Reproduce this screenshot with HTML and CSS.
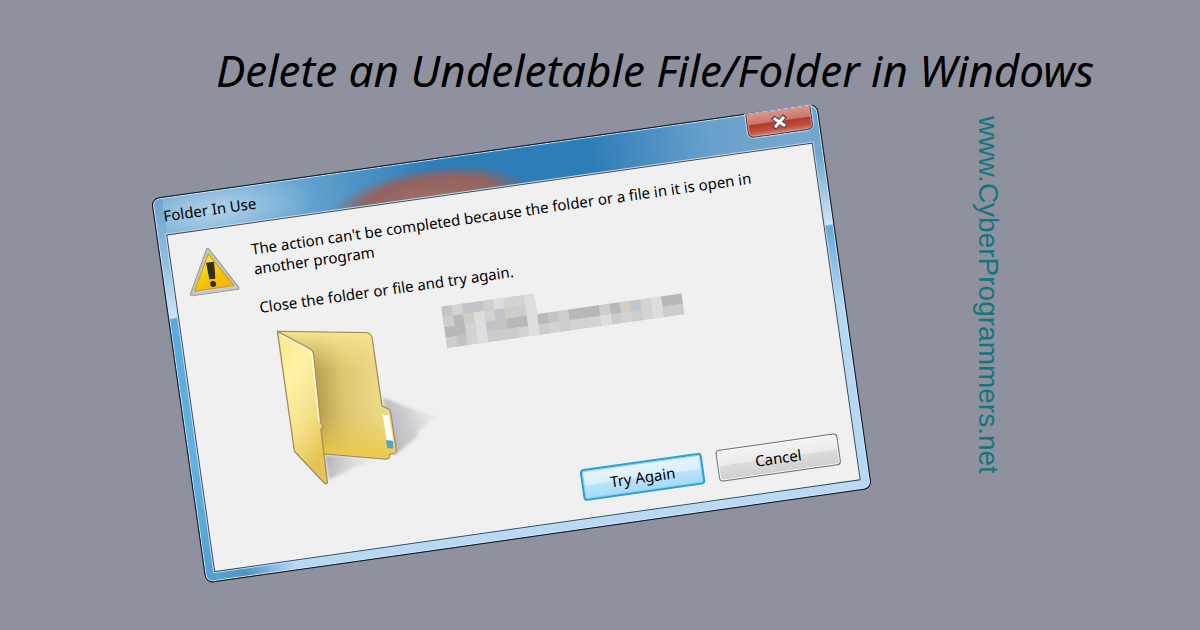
FILE: index.html
```
<!DOCTYPE html>
<html lang="en">
<head>
    <meta charset="UTF-8">
    <meta name="viewport" content="width=device-width, initial-scale=1.0">
    <title>Delete an Undeletable File/Folder in Windows</title>
    <link rel="stylesheet" href="styles.css">
</head>
<body>
    <h1 class="headline">Delete an Undeletable File/Folder in Windows</h1>

    <main class="stage">
        <section class="dialog" role="dialog" aria-labelledby="dialogTitle">
            <header class="title-bar">
                <h2 class="dialog-title" id="dialogTitle">Folder In Use</h2>
                <button class="close" type="button" aria-label="Close">
                    <svg width="18" height="14" viewBox="0 0 18 14">
                        <path d="M4.500 3 L13.500 11 M13.500 3 L4.500 11" stroke="#5b4a50" stroke-width="5" stroke-linecap="square"/>
                        <path d="M5 3.500 L13 10.500 M13 3.500 L5 10.500" stroke="#fff" stroke-width="3" stroke-linecap="square"/>
                    </svg>
                </button>
            </header>

            <div class="dialog-body">
                <svg class="warning" width="52" height="48" viewBox="0 0 52 48">
                    <defs>
                        <linearGradient id="warn" x1="0" y1="0" x2="0.6" y2="1">
                            <stop offset="0" stop-color="#fff04a"/>
                            <stop offset="0.5" stop-color="#f8d312"/>
                            <stop offset="0.7" stop-color="#f2c30e"/>
                            <stop offset="1" stop-color="#f3b80c"/>
                        </linearGradient>
                    </defs>
                    <path d="M24 4 L48 46 H2 Z" fill="#999" stroke="#999" stroke-width="4" stroke-linejoin="round"/>
                    <path d="M24 4 L48 46 H2 Z" fill="#d0d0d0" stroke="#c4c4c4" stroke-width="2" stroke-linejoin="round"/>
                    <path d="M24 8 L45 43 H5 Z" fill="url(#warn)" stroke="#c79a18" stroke-width="1" stroke-linejoin="round"/>
                    <path d="M21 17 H28 L27 33 H22 Z" fill="#332d20" stroke="#332d20" stroke-linejoin="round"/>
                    <circle cx="24.500" cy="38.500" r="3" fill="#332d20"/>
                </svg>

                <div class="message">
                    <p>The action can't be completed because the folder or a file in it is open in another program</p>
                    <p>Close the folder or file and try again.</p>

                    <div class="item">
                        <svg class="folder" width="160" height="170" viewBox="0 0 160 170">
                            <defs>
                                <linearGradient id="front" x1="0" y1="0" x2="0.5" y2="1">
                                    <stop offset="0" stop-color="#f6e58e"/>
                                    <stop offset="0.35" stop-color="#fff3a6"/>
                                    <stop offset="0.7" stop-color="#f5e08a"/>
                                    <stop offset="1" stop-color="#e5c452"/>
                                </linearGradient>
                                <linearGradient id="back" x1="0" y1="0.4" x2="1" y2="0.3">
                                    <stop offset="0.35" stop-color="#bda454"/>
                                    <stop offset="0.55" stop-color="#dfc772"/>
                                    <stop offset="1" stop-color="#f3e395"/>
                                </linearGradient>
                                <linearGradient id="glow" x1="0" y1="0" x2="0" y2="1">
                                    <stop offset="0" stop-color="#f6e592"/>
                                    <stop offset="0.3" stop-color="#f0dc80" stop-opacity="0"/>
                                    <stop offset="0.65" stop-color="#e8c84e" stop-opacity="0"/>
                                    <stop offset="1" stop-color="#ecca48"/>
                                </linearGradient>
                                <linearGradient id="shade" x1="0" y1="0.6" x2="1" y2="0.2">
                                    <stop offset="0" stop-color="#b4b4b8"/>
                                    <stop offset="0.5" stop-color="#cfcfd2"/>
                                    <stop offset="1" stop-color="#e6e6e6" stop-opacity="0.4"/>
                                </linearGradient>
                                <linearGradient id="shade2" x1="0" y1="0.5" x2="1" y2="0.6">
                                    <stop offset="0" stop-color="#b2b2b5"/>
                                    <stop offset="1" stop-color="#eee" stop-opacity="0.1"/>
                                </linearGradient>
                                <filter id="soft"><feGaussianBlur stdDeviation="5"/></filter>
                            </defs>
                            <g transform="translate(-8 -17) rotate(8.100) scale(0.333)">
                                <path d="M192 436 L370 450 L285 470 L205 510 Z" fill="url(#shade2)" filter="url(#soft)"/>
                                <path d="M366 262 L450 296 L528 318 L474 364 L470 380 L402 436 Z" fill="url(#shade)" filter="url(#soft)"/>
                                <path d="M50 64 L318 68 Q330 70 334 82 L364 288 L384 298 Q389 301 390 308 L407 420 Q407 429 400 431 L388 432 L386 442 Q384 448 376 448 L188 432 Z" fill="url(#back)" stroke="#a0905f" stroke-width="4"/>
                                <path d="M50 66 L318 70 Q328 72 332 82 L362 288 L382 298 L405 428 L386 432 L382 445 L188 430 Z" fill="url(#glow)"/>
                                <path d="M366 314 L384 316 L398 394 L378 392 Z" fill="#fffef2"/>
                                <path d="M376 391 L396 393 L399 416 L380 415 Z" fill="#52a3cf"/>
                                <path d="M50 64 L150 118 Q158 122 159 134 L180 338 L188 350 L181 358 L200 518 Q198 524 190 519 L101 424 Z" fill="url(#front)" stroke="#a0905f" stroke-width="4" stroke-linejoin="round"/>
                                <path d="M58 74 L146 121 Q153 125 154 135 L175 338" fill="none" stroke="#fffbd2" stroke-width="4"/>
                            </g>
                        </svg>

                        <!-- pixelated file details -->
                        <svg class="mosaic" width="240" height="42" viewBox="0 0 23 4" preserveAspectRatio="none">
                            <path d="M0 0H9V4H0ZM9 2H23V4H9Z" fill="#d3d3d4"/>
                            <path d="M0 0h1v1h-1zM2 0h2v1h-2zM5 1h1v1h-1zM3 2h1v1h-1zM4 2h2v1h-2zM1 3h1v1h-1zM10 2h1v1h-1z" fill="#c4c4c8"/>
                            <path d="M1 1h1v1h-1zM0 2h2v1h-2zM6 2h2v1h-2zM9 2h1v1h-1zM12 2h3v1h-3zM16 2h1v1h-1zM21 2h2v1h-2z" fill="#b8b7ba"/>
                            <path d="M4 0h1v1h-1zM0 1h1v1h-1zM2 1h1v1h-1zM6 1h2v1h-2zM0 3h1v1h-1zM11 2h1v1h-1zM15 2h1v1h-1z" fill="#d0ccc9"/>
                            <path d="M5 0h1v1h-1zM8 0h1v4h-1zM3 1h1v3h-1zM15 3h1v1h-1zM20 2h1v2h-1z" fill="#dddedf"/>
                            <path d="M17 2h1v1h-1z" fill="#d4cbc5"/>
                            <path d="M18 2h1v1h-1z" fill="#bfc7cc"/>
                            <path d="M4 3h3v1h-3zM9 3h1v1h-1zM11 3h1v1h-1zM16 3h1v1h-1zM18 3h1v1h-1zM21 3h2v1h-2z" fill="#cccccd"/>
                        </svg>
                    </div>
                </div>

                <div class="actions">
                    <button class="btn btn-default" type="button">Try Again</button>
                    <button class="btn" type="button">Cancel</button>
                </div>
            </div>
        </section>

        <a class="site" href="#">www.CyberProgrammers.net</a>
    </main>
</body>
</html>
```
FILE: styles.css
```
* {
    box-sizing: border-box;
}
body {
    margin: 0;
    min-height: 100vh;
    background-color: #8f919e;
    color: #000;
    font-family: "Noto Sans", "Segoe UI", sans-serif;
    overflow-x: hidden;
}
.headline {
    margin: 0;
    padding: 40px 0 0 110px;
    font-family: "Segoe Print", "Noto Sans", sans-serif;
    font-size: 44px;
    font-style: italic;
    font-weight: normal;
    line-height: 60px;
    text-align: center;
}
.stage {
    display: flex;
    justify-content: center;
    align-items: flex-start;
    gap: 124px;
    padding: 16px 22px 0 0;
}
.dialog {
    width: 673px;
    max-width: 100%;
    margin-top: 33px;
    padding: 0 9px 9px;
    border: 1px solid #0d131a;
    border-radius: 8px;
    background:
        linear-gradient(180deg, #6da4d0 0, #8dbce0 60px, #cde5f5 120px, #58abdc 122px, #62b2e0 70%, #4f9fd0 100%) left / 10px 100% no-repeat,
        linear-gradient(180deg, #6da4d0 0, #70a7d2 50px, #cde5f5 120px, #66aadb 122px, #b5d8f5 200px, #b5d8f5 100%) right / 10px 100% no-repeat,
        linear-gradient(90deg, #58a8d8 0, #4f94c4 40px, #b5d8f5 90px, #b9daf7 100%) bottom / 100% 10px no-repeat,
        radial-gradient(ellipse 100px 36px at 275px 44px, #9d7468 0, #94625f 70%, rgba(148, 98, 95, 0) 100%),
        radial-gradient(ellipse 100px 36px at 60px 20px, #b3d2e8 0, rgba(179, 210, 232, 0) 100%),
        linear-gradient(90deg, #6fa9d3 0, #69a6d2 140px, #2e7db7 280px, #2e7db7 440px, #69a0cc 560px, #78a9d2 100%);
    box-shadow: inset 0 0 0 1px #cfe5f3;
    transform: rotate(-8.1deg);
}
.title-bar {
    display: flex;
    justify-content: space-between;
    align-items: flex-start;
    height: 37px;
}
.dialog-title {
    margin: 0;
    font-size: 15px;
    font-weight: normal;
    line-height: 36px;
}
.close {
    display: flex;
    justify-content: center;
    align-items: center;
    width: 66px;
    height: 24px;
    margin-right: -3px;
    padding: 0;
    border: 1px solid #5a2a30;
    border-top: 0;
    border-radius: 0 0 6px 6px;
    background: linear-gradient(#d9968c 0, #cc7469 45%, #ae3c2c 50%, #c0503f 80%, #d98577 100%);
    box-shadow: inset 0 0 0 1px #d99c93, 0 0 0 1px #b9d6ea;
}
.dialog-body {
    display: grid;
    grid-template-columns: 52px 1fr;
    column-gap: 15px;
    padding: 16px 16px 17px 14px;
    border: 1px solid #3b4a59;
    background-color: #f0f0f0;
    box-shadow: 0 0 0 1px #bfdcf0;
}
.message {
    margin-top: -1px;
}
.message p {
    margin: 0 0 19px;
    font-size: 15px;
    line-height: 20px;
}
.item {
    display: flex;
    align-items: flex-start;
    gap: 11px;
    margin: -9px 0 0 9px;
}
.mosaic {
    margin-top: 5px;
}
.actions {
    grid-column: 1 / -1;
    display: flex;
    justify-content: flex-end;
    gap: 14px;
    margin-top: 16px;
}
.btn {
    width: 123px;
    height: 32px;
    padding: 0;
    border: 1px solid #707070;
    border-radius: 4px;
    background: linear-gradient(#f3f3f3 0, #ebebeb 50%, #dcdcdc 51%, #cfcfcf 100%);
    box-shadow: inset 0 0 0 1px #fafafa;
    color: #000;
    font-family: inherit;
    font-size: 15px;
    line-height: 20px;
}
.btn-default {
    border: 2px solid #2f9fd6;
    background: linear-gradient(#e6f5fd 0, #d9effb 50%, #bde4f9 51%, #a4d9f5 100%);
    box-shadow: inset 0 0 0 1px #7fd3f5;
}
.site {
    writing-mode: vertical-rl;
    color: #13757d;
    font-family: "Liberation Sans", Arial, sans-serif;
    font-size: 28px;
    line-height: 32px;
    text-decoration: none;
}
```
